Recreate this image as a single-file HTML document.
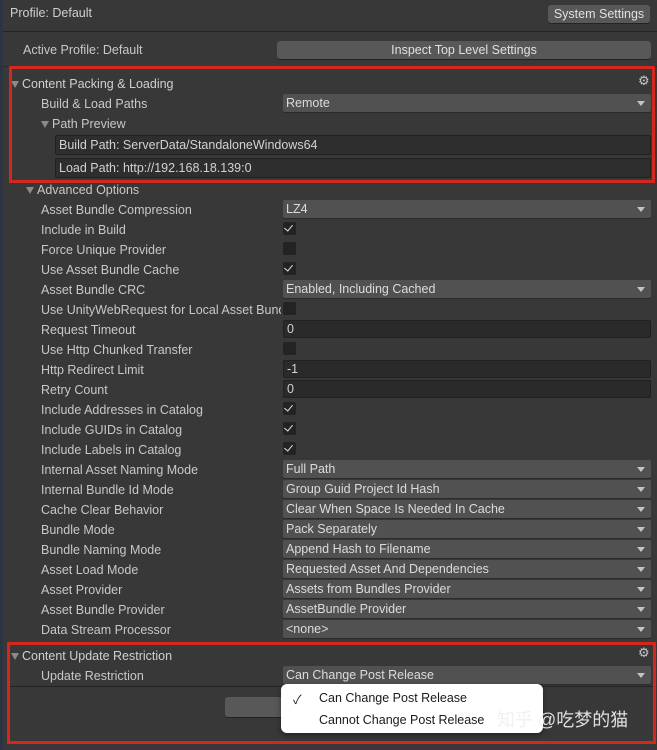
<!DOCTYPE html>
<html><head><meta charset="utf-8"><style>
*{margin:0;padding:0;box-sizing:border-box}
body{width:657px;height:750px;background:#383838;font-family:"Liberation Sans","Noto Sans CJK SC",sans-serif;font-size:12.5px;color:#c8c8c8;position:relative;overflow:hidden}
.a{position:absolute;white-space:nowrap}
.lbl{position:absolute;left:41px;white-space:nowrap;line-height:16px}
.dd{position:absolute;left:283px;width:368px;height:18px;background:#515151;border-radius:2px;color:#dcdcdc;padding-left:3px;line-height:18px;box-shadow:0 1px 0 #2a2a2a}
.dd:after{content:"";position:absolute;right:6px;top:7px;border-left:4px solid transparent;border-right:4px solid transparent;border-top:5px solid #c4c4c4}
.tf{position:absolute;left:283px;width:368px;height:18px;background:#2a2a2a;border:1px solid #212121;border-radius:2px;color:#d2d2d2;padding-left:3px;line-height:16px}
.cb{position:absolute;left:283px;width:13px;height:13px;background:#232323;border-radius:2px}
.ck:after{content:"";position:absolute;left:3px;top:1px;width:4px;height:7px;border-right:1.5px solid #e0e0e0;border-bottom:1.5px solid #e0e0e0;transform:rotate(40deg)}
.tri{display:inline-block;width:0;height:0;border-left:4px solid transparent;border-right:4px solid transparent;border-top:7px solid #8a8a8a;margin-right:3px;vertical-align:0px}
.red{position:absolute;border:3px solid #d4281f}
.btn{position:absolute;background:#585858;border-radius:3px;color:#e0e0e0;text-align:center;line-height:18px;box-shadow:0 1px 0 #232323}
.gear{position:absolute;left:638px;font-family:"DejaVu Sans",sans-serif;font-size:13px;color:#c8c8c8}
</style></head><body>
<div class="a" style="left:0;top:0;width:3px;height:750px;background:#2b3440"></div>
<div class="a" style="left:10px;top:6px;color:#d0d0d0">Profile: Default</div>
<div class="btn" style="left:548px;top:5px;width:102px;height:18px">System Settings</div>
<div class="a" style="left:3px;top:31px;width:654px;height:1px;background:#232323"></div>
<div class="a" style="left:23px;top:43px">Active Profile: Default</div>
<div class="btn" style="left:277px;top:41px;width:374px;height:18px">Inspect Top Level Settings</div>
<div class="a" style="left:3px;top:66px;width:654px;height:1px;background:#2a2a2a"></div>

<div class="a" style="left:11px;top:77px;color:#d0d0d0"><span class="tri"></span>Content Packing &amp; Loading</div>
<div class="gear" style="top:74px">⚙</div>
<div class="lbl" style="top:96px">Build &amp; Load Paths</div>
<div class="dd" style="top:94px">Remote</div>
<div class="a" style="left:41px;top:117px"><span class="tri"></span>Path Preview</div>
<div class="tf" style="left:55px;width:596px;top:135px;height:20px;line-height:18px;background:#2e2e2e">Build Path: ServerData/StandaloneWindows64</div>
<div class="tf" style="left:55px;width:596px;top:158px;height:20px;line-height:18px;background:#2e2e2e">Load Path: http://192.168.18.139:0</div>
<div class="red" style="left:9px;top:66px;width:646px;height:117px"></div>

<div class="a" style="left:26px;top:183px"><span class="tri"></span>Advanced Options</div>
<div class="lbl" style="top:202px">Asset Bundle Compression</div><div class="dd" style="top:200px">LZ4</div>
<div class="lbl" style="top:222px">Include in Build</div><div class="cb ck" style="top:222px"></div>
<div class="lbl" style="top:242px">Force Unique Provider</div><div class="cb" style="top:242px"></div>
<div class="lbl" style="top:262px">Use Asset Bundle Cache</div><div class="cb ck" style="top:262px"></div>
<div class="lbl" style="top:282px">Asset Bundle CRC</div><div class="dd" style="top:280px">Enabled, Including Cached</div>
<div class="lbl" style="top:302px;width:240px;overflow:hidden">Use UnityWebRequest for Local Asset Bundles</div><div class="cb" style="top:302px"></div>
<div class="lbl" style="top:322px">Request Timeout</div><div class="tf" style="top:320px">0</div>
<div class="lbl" style="top:342px">Use Http Chunked Transfer</div><div class="cb" style="top:342px"></div>
<div class="lbl" style="top:362px">Http Redirect Limit</div><div class="tf" style="top:360px">-1</div>
<div class="lbl" style="top:382px">Retry Count</div><div class="tf" style="top:380px">0</div>
<div class="lbl" style="top:402px">Include Addresses in Catalog</div><div class="cb ck" style="top:402px"></div>
<div class="lbl" style="top:422px">Include GUIDs in Catalog</div><div class="cb ck" style="top:422px"></div>
<div class="lbl" style="top:442px">Include Labels in Catalog</div><div class="cb ck" style="top:442px"></div>
<div class="lbl" style="top:462px">Internal Asset Naming Mode</div><div class="dd" style="top:460px">Full Path</div>
<div class="lbl" style="top:482px">Internal Bundle Id Mode</div><div class="dd" style="top:480px">Group Guid Project Id Hash</div>
<div class="lbl" style="top:502px">Cache Clear Behavior</div><div class="dd" style="top:500px">Clear When Space Is Needed In Cache</div>
<div class="lbl" style="top:522px">Bundle Mode</div><div class="dd" style="top:520px">Pack Separately</div>
<div class="lbl" style="top:542px">Bundle Naming Mode</div><div class="dd" style="top:540px">Append Hash to Filename</div>
<div class="lbl" style="top:562px">Asset Load Mode</div><div class="dd" style="top:560px">Requested Asset And Dependencies</div>
<div class="lbl" style="top:582px">Asset Provider</div><div class="dd" style="top:580px">Assets from Bundles Provider</div>
<div class="lbl" style="top:602px">Asset Bundle Provider</div><div class="dd" style="top:600px">AssetBundle Provider</div>
<div class="lbl" style="top:622px">Data Stream Processor</div><div class="dd" style="top:620px">&lt;none&gt;</div>

<div class="a" style="left:11px;top:649px;color:#d0d0d0"><span class="tri"></span>Content Update Restriction</div>
<div class="gear" style="top:646px">⚙</div>
<div class="lbl" style="top:668px">Update Restriction</div><div class="dd" style="top:666px">Can Change Post Release</div>
<div class="a" style="left:9px;top:686px;width:645px;height:1px;background:#232323"></div>
<div class="btn" style="left:225px;top:697px;width:120px;height:20px"></div>
<div class="red" style="left:7px;top:642px;width:649px;height:102px"></div>

<div class="a" style="left:281px;top:684px;width:262px;height:49px;background:#fff;border-radius:6px;box-shadow:0 2px 6px rgba(0,0,0,.4);color:#1a1a1a;font-size:12.5px">
<div class="a" style="left:12px;top:5px">✓</div>
<div class="a" style="left:38px;top:7px">Can Change Post Release</div>
<div class="a" style="left:38px;top:29px">Cannot Change Post Release</div>
</div>
<div class="a" style="left:497px;top:706px;color:#f0f0f0;font-size:18px;opacity:.9">知乎 @吃梦的猫</div>
</body></html>
